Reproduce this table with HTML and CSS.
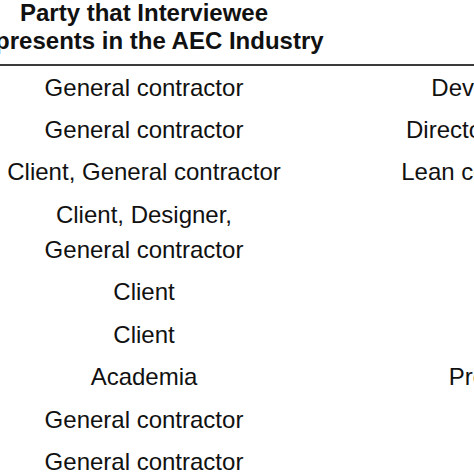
FILE: index.html
```html
<!DOCTYPE html>
<html>
<head>
<meta charset="utf-8">
<link rel="stylesheet" href="styles.css">
</head>
<body>
<table class="tbl">
  <colgroup><col class="c1"><col class="c2"></colgroup>
  <thead>
    <tr>
      <th>Party that Interviewee<br>Represents in the AEC Industry</th>
      <th></th>
    </tr>
  </thead>
  <tbody>
    <tr><td>General contractor</td><td>Developer</td></tr>
    <tr><td>General contractor</td><td>Director of BIM</td></tr>
    <tr><td>Client, General contractor</td><td>Lean consultant</td></tr>
    <tr><td>Client, Designer,<br>General contractor</td><td></td></tr>
    <tr><td>Client</td><td></td></tr>
    <tr><td>Client</td><td></td></tr>
    <tr><td>Academia</td><td>Project</td></tr>
    <tr><td>General contractor</td><td></td></tr>
    <tr><td>General contractor</td><td></td></tr>
  </tbody>
</table>
</body>
</html>
```
FILE: styles.css
```css
html, body {
  margin: 0;
  padding: 0;
  background: #fff;
  overflow: hidden;
  width: 474px;
  height: 474px;
}
.tbl {
  margin-left: -72px;
  margin-top: -1px;
  border-collapse: collapse;
  table-layout: fixed;
  width: 684px;
  font-family: "Liberation Sans", Arial, Helvetica, sans-serif;
  font-size: 24px;
  color: #111;
}
.c1 { width: 432px; }
.c2 { width: 252px; }
.tbl th {
  font-weight: bold;
  line-height: 28px;
  padding: 0 0 9px 0;
  border-bottom: 2px solid #3a3a3a;
  text-align: center;
  white-space: nowrap;
  vertical-align: top;
}
.tbl td {
  line-height: 35.2px;
  padding: 3.6px 0;
  text-align: center;
  white-space: nowrap;
  vertical-align: top;
}
```
